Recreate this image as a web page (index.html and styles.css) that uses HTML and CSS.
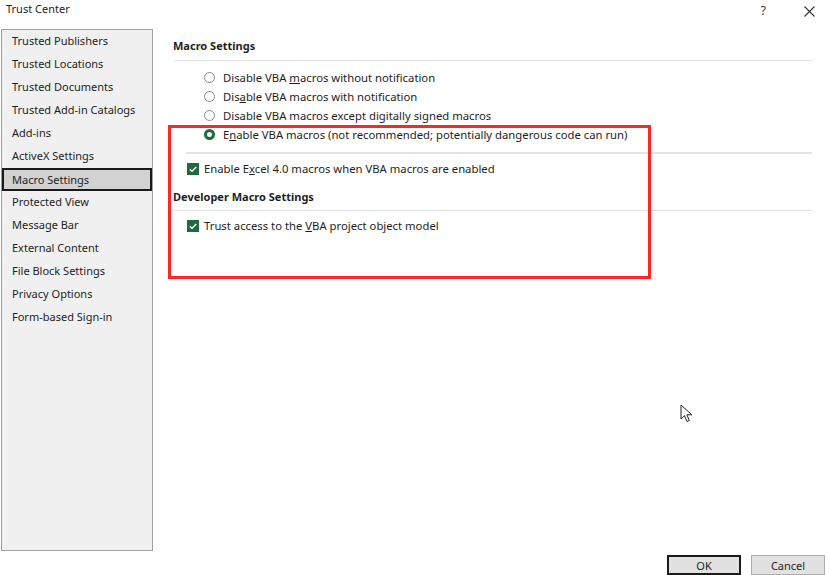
FILE: index.html
```html
<!DOCTYPE html>
<html lang="en">
<head>
  <meta charset="UTF-8">
  <title>Trust Center</title>
  <link rel="stylesheet" href="styles.css">
</head>
<body>
  <div class="dialog">
    <div class="titlebar">
      <span class="title">Trust Center</span>
      <span class="help">?</span>
      <svg class="close" width="11" height="11" viewBox="0 0 11 11"><path d="M0.5 0.5L10.5 10.5M10.5 0.5L0.5 10.5" stroke="#333" stroke-width="1.1" fill="none"/></svg>
    </div>

    <div class="content">
      <ul class="nav">
        <li>Trusted Publishers</li>
        <li>Trusted Locations</li>
        <li>Trusted Documents</li>
        <li>Trusted Add-in Catalogs</li>
        <li>Add-ins</li>
        <li>ActiveX Settings</li>
        <li class="active">Macro Settings</li>
        <li>Protected View</li>
        <li>Message Bar</li>
        <li>External Content</li>
        <li>File Block Settings</li>
        <li>Privacy Options</li>
        <li>Form-based Sign-in</li>
      </ul>

      <div class="main">
        <h2 class="section">Macro Settings</h2>
        <div class="radios">
          <label class="radio"><span class="dot"></span><span>Disable VBA <u>m</u>acros without notification</span></label>
          <label class="radio"><span class="dot"></span><span>Dis<u>a</u>ble VBA macros with notification</span></label>
          <label class="radio"><span class="dot"></span><span>Disable VBA macros except digitally signed macros</span></label>
          <label class="radio on"><span class="dot"></span><span>E<u>n</u>able VBA macros (not recommended; potentially dangerous code can run)</span></label>
        </div>
        <div class="sep"></div>
        <label class="check"><span class="box"><svg width="12" height="12" viewBox="0 0 12 12"><path d="M2.8 6.2L5 8.2L9.3 3.9" stroke="#fff" stroke-width="1.4" fill="none"/></svg></span><span>Enable E<u>x</u>cel 4.0 macros when VBA macros are enabled</span></label>

        <h2 class="section dev">Developer Macro Settings</h2>
        <label class="check"><span class="box"><svg width="12" height="12" viewBox="0 0 12 12"><path d="M2.8 6.2L5 8.2L9.3 3.9" stroke="#fff" stroke-width="1.4" fill="none"/></svg></span><span>Trust access to the <u>V</u>BA project object model</span></label>

        <div class="highlight"></div>
        <svg class="cursor" width="14" height="20" viewBox="0 0 14 20"><path d="M1 1L1 15L4.5 11.6L7 17.5L9.3 16.5L6.9 10.8L11.8 10.8Z" fill="#fff" stroke="#222" stroke-width="1"/></svg>
      </div>
    </div>

    <div class="buttons">
      <button class="btn default">OK</button>
      <button class="btn">Cancel</button>
    </div>
  </div>
</body>
</html>
```

FILE: styles.css
```css
body {
  margin: 0;
  background: #fff;
  font-family: "Noto Sans", "Liberation Sans", sans-serif;
  font-size: 11px;
  color: #1e1e1e;
}

.dialog {
  width: 829px;
  height: 575px;
  display: flex;
  flex-direction: column;
  overflow: hidden;
}

.titlebar {
  height: 29px;
  display: flex;
  align-items: flex-start;
  padding-top: 1px;
  box-sizing: border-box;
}

.title {
  margin-left: 6px;
  font-size: 11px;
}

.help {
  margin-left: auto;
  margin-top: 1px;
  font-size: 12px;
  color: #333;
}

.close {
  margin: 5px 14px 0 38px;
}

.content {
  display: flex;
  height: 522px;
}

.nav {
  list-style: none;
  margin: 0 0 0 1px;
  padding: 0;
  width: 150px;
  background: #f0f0f0;
  border: 1px solid #a0a0a0;
}

.nav li {
  height: 23px;
  line-height: 21px;
  padding-left: 10px;
  box-sizing: border-box;
}

.nav li.active {
  background: #d2d2d2;
  border: 2px solid #1a1a1a;
  line-height: 19px;
  padding-left: 8px;
}

.main {
  position: relative;
  flex: 1;
  padding: 0 17px 0 20px;
  font-size: 11.3px;
}

.section {
  margin: 0;
  font-size: 11px;
  font-weight: bold;
  padding: 9px 0 7px;
  border-bottom: 1px solid #e3e3e3;
}

.radios {
  display: flex;
  flex-direction: column;
  padding: 7px 0 0 31px;
}

.radio {
  display: flex;
  align-items: center;
  height: 19px;
}

.dot {
  width: 9px;
  height: 9px;
  border: 1px solid #8a8a8a;
  border-radius: 50%;
  margin-right: 8px;
  box-sizing: content-box;
}

.radio.on .dot {
  width: 5px;
  height: 5px;
  border: 3px solid #1f6b3f;
}

.sep {
  margin: 8px 0 0 13px;
  border-top: 2px solid #e3e3e3;
}

.check {
  display: flex;
  align-items: center;
  height: 19px;
  margin: 5px 0 0 14px;
}

.box {
  width: 12px;
  height: 12px;
  background: #1f6b3f;
  margin-right: 5px;
  display: flex;
}

.section.dev {
  padding: 11px 0 6px;
}

.highlight {
  position: absolute;
  left: 15px;
  top: 96px;
  width: 477px;
  height: 148px;
  border: 3px solid #f52a22;
}

.cursor {
  position: absolute;
  left: 527px;
  top: 375px;
}

.buttons {
  display: flex;
  justify-content: flex-end;
  gap: 10px;
  padding: 4px 4px 0 0;
}

.btn {
  width: 74px;
  height: 20px;
  font-family: inherit;
  font-size: 11px;
  color: #1e1e1e;
  background: #e1e1e1;
  border: 1px solid #adadad;
  padding: 0;
}

.btn.default {
  border: 2px solid #1a1a1a;
}
```
